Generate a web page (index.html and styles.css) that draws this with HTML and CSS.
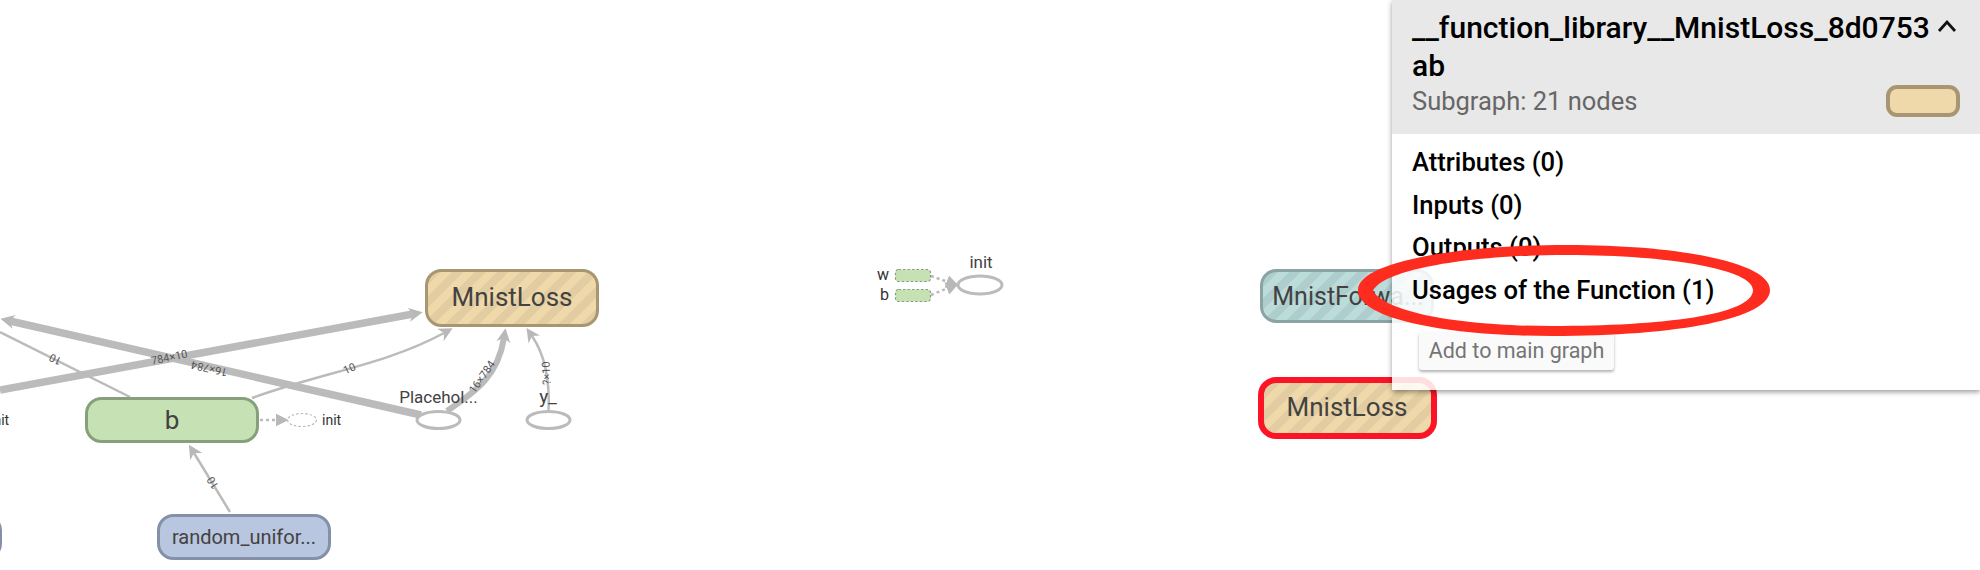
FILE: index.html
```html
<!DOCTYPE html>
<html lang="en">
<head>
<meta charset="utf-8">
<title>Function library graph</title>
<link rel="stylesheet" href="styles.css">
</head>
<body>
<main class="board">
  <svg class="graph" width="1980" height="570" viewBox="0 0 1980 570" xmlns="http://www.w3.org/2000/svg">
    <defs>
      <pattern id="stripe-tan" width="16" height="16" patternUnits="userSpaceOnUse" patternTransform="rotate(45)">
        <rect class="tan-base" width="16" height="16"/><rect class="tan-dark" width="8" height="16"/>
      </pattern>
      <pattern id="stripe-teal" width="16" height="16" patternUnits="userSpaceOnUse" patternTransform="rotate(45)">
        <rect class="teal-base" width="16" height="16"/><rect class="teal-dark" width="8" height="16"/>
      </pattern>
      <marker id="head" viewBox="0 0 10 10" refX="3" refY="5" markerWidth="14" markerHeight="14" markerUnits="userSpaceOnUse" orient="auto">
        <path class="head" d="M0 0L10 5L0 10L3 5z"/>
      </marker>
      <marker id="head-dot" viewBox="0 0 10 10" refX="1" refY="5" markerWidth="13" markerHeight="13" markerUnits="userSpaceOnUse" orient="auto">
        <path class="head" d="M0 0L10 5L0 10z"/>
      </marker>
    </defs>

    <line class="edge thin" x1="130" y1="397" x2="0" y2="332"/>
    <line class="edge thick" x1="421" y1="415" x2="10" y2="321" marker-end="url(#head)"/>
    <line class="edge thick" x1="0" y1="390" x2="413" y2="314" marker-end="url(#head)"/>
    <path class="edge thin" d="M252 398C320 373 385 365 444 333" marker-end="url(#head)"/>
    <path class="edge medium" d="M447 411C478 390 498 375 504 338" marker-end="url(#head)"/>
    <path class="edge thin" d="M548.500 411C550 380 545 355 532 336" marker-end="url(#head)"/>
    <line class="edge thin" x1="230" y1="512" x2="194" y2="453" marker-end="url(#head)"/>
    <line class="edge dotted" x1="260" y1="420" x2="277" y2="420" marker-end="url(#head-dot)"/>
    <line class="edge dotted" x1="931" y1="276" x2="948" y2="282" marker-end="url(#head-dot)"/>
    <line class="edge dotted" x1="931" y1="295" x2="948" y2="288" marker-end="url(#head-dot)"/>

    <rect class="node" x="-170.500" y="515.500" width="171" height="43" rx="15" fill="#b9c6df" stroke="#848fa8"/>
    <rect class="node" x="426.500" y="270.500" width="171" height="55" rx="15" fill="url(#stripe-tan)" stroke="#a89672"/>
    <rect class="node" x="86.500" y="398.500" width="171" height="43" rx="15" fill="#c6e1b4" stroke="#87a07c"/>
    <rect class="node" x="158.500" y="515.500" width="171" height="43" rx="15" fill="#b9c6df" stroke="#848fa8"/>
    <rect class="node" x="1261.500" y="270.500" width="171" height="51" rx="15" fill="url(#stripe-teal)" stroke="#8aa4a4"/>
    <rect class="node selected" x="1261" y="380" width="173" height="56" rx="15" fill="url(#stripe-tan)"/>

    <ellipse class="op" cx="438.500" cy="420" rx="21.500" ry="8.500"/>
    <ellipse class="op" cx="548.500" cy="420" rx="21.500" ry="8.500"/>
    <ellipse class="op-dashed" cx="302" cy="420" rx="14.500" ry="6.500"/>
    <ellipse class="op" cx="980" cy="285" rx="22" ry="9"/>
    <rect class="var-dashed" x="895.500" y="269.500" width="35" height="12" rx="3"/>
    <rect class="var-dashed" x="895.500" y="289.500" width="35" height="12" rx="3"/>

    <text class="label-lg" x="512" y="306">MnistLoss</text>
    <text class="label-lg" x="172" y="429">b</text>
    <text class="label-md" x="244" y="544">random_unifor...</text>
    <text class="label-lg label-fit" x="1348" y="305">MnistForwa...</text>
    <text class="label-lg" x="1347" y="416">MnistLoss</text>
    <text class="label-sm" x="438.500" y="403">Placehol...</text>
    <text class="label-sm label-y" x="548" y="403">y_</text>
    <text class="label-sm" x="981" y="268">init</text>
    <text class="label-xs start" x="322" y="425">init</text>
    <text class="label-xs start" x="-10" y="425">init</text>
    <text class="label-xs label-var end" x="889" y="280">w</text>
    <text class="label-xs label-var end" x="889" y="300">b</text>

    <text class="edge-label" transform="translate(170 361) rotate(-12)">784×10</text>
    <text class="edge-label" transform="translate(210 365) rotate(193)">16×784</text>
    <text class="edge-label" transform="translate(57 356) rotate(206)">10</text>
    <text class="edge-label" transform="translate(351 372) rotate(-24)">10</text>
    <text class="edge-label" transform="translate(485 379) rotate(-55)">16×784</text>
    <text class="edge-label" transform="translate(550 373) rotate(-92)">?×10</text>
    <text class="edge-label" transform="translate(216 481) rotate(-121)">10</text>
  </svg>

  <aside class="panel">
    <header class="panel-head">
      <div class="panel-title-row">
        <h1 class="panel-title">__function_library__MnistLoss_8d0753ab</h1>
        <svg class="chevron" width="20" height="14" viewBox="0 0 20 14" xmlns="http://www.w3.org/2000/svg"><path d="M2 13L10 4L18 13"/></svg>
      </div>
      <div class="panel-sub-row">
        <span class="panel-sub">Subgraph: 21 nodes</span>
        <span class="swatch"></span>
      </div>
    </header>
    <ul class="panel-list">
      <li>Attributes (0)</li>
      <li>Inputs (0)</li>
      <li>Outputs (0)</li>
      <li>Usages of the Function (1)</li>
    </ul>
    <button class="panel-btn" type="button">Add to main graph</button>
  </aside>

  <svg class="annotation" width="430" height="110" viewBox="0 0 430 110" xmlns="http://www.w3.org/2000/svg">
    <path class="ring" fill-rule="evenodd" d="M6 55C6 28 100 10 215 10C330 10 418 28 418 55C418 84 325 101 200 101C95 101 6 84 6 55ZM21 56C35 78 110 91 200 91C310 91 401 80 401 55C401 35 320 20 215 20C110 20 30 36 21 56Z"/>
  </svg>
</main>
</body>
</html>
```
FILE: styles.css
```css
* { box-sizing: border-box; }
html, body { margin: 0; padding: 0; background: #fff; }
.board {
  position: relative;
  width: 1980px;
  height: 570px;
  overflow: hidden;
  font-family: Roboto, "Liberation Sans", sans-serif;
}
.graph { position: absolute; left: 0; top: 0; }
.tan-base { fill: #efd8a9; }
.tan-dark { fill: #e2cca1; }
.teal-base { fill: #bcdbdb; }
.teal-dark { fill: #aecdcd; }
.head { fill: #b8b8b8; }
.edge { fill: none; stroke: #bbb; }
.thin { stroke-width: 2.5; }
.medium { stroke-width: 6; }
.thick { stroke-width: 7.5; }
.dotted { stroke-width: 2.5; stroke-dasharray: 3 3; }
.node { stroke-width: 3; }
.selected { stroke: #fb1326; stroke-width: 6; }
.op { fill: #fff; stroke: #bbb; stroke-width: 3; }
.op-dashed { fill: #fff; stroke: #bbb; stroke-width: 1.2; stroke-dasharray: 2.500 2; }
.var-dashed { fill: #c6e1b4; stroke: #87a07c; stroke-width: 1.2; stroke-dasharray: 2.500 2; }
.label-lg, .label-md, .label-sm, .label-xs { font-family: Roboto, "Liberation Sans", sans-serif; fill: #424242; text-anchor: middle; }
.label-lg { font-size: 26px; }
.label-fit { font-size: 25px; }
.label-md { font-size: 20px; }
.label-sm { font-size: 17px; }
.label-y { font-size: 19px; }
.label-xs { font-size: 14px; fill: #333; }
.label-var { font-size: 16px; }
.start { text-anchor: start; }
.end { text-anchor: end; }
.edge-label { font-family: Roboto, "Liberation Sans", sans-serif; font-size: 11px; fill: #555; text-anchor: middle; }

.panel {
  position: absolute;
  top: 0;
  right: 0;
  bottom: 180px;
  width: 588px;
  display: flex;
  flex-direction: column;
  background: rgba(255, 255, 255, .86);
  box-shadow: 0 2px 5px rgba(0, 0, 0, .4);
}
.panel-head {
  height: 134px;
  padding: 9px 20px 0;
  background: #e8e8e8;
}
.panel-title-row { display: flex; align-items: flex-start; gap: 5px; }
.panel-title {
  margin: 0;
  width: 520px;
  font-size: 30px;
  line-height: 38px;
  font-weight: 500;
  color: #000;
  word-break: break-all;
}
.chevron { margin-top: 9px; flex: none; }
.chevron path { fill: none; stroke: #111; stroke-width: 2.800; }
.panel-sub-row { display: flex; justify-content: space-between; align-items: center; }
.panel-sub { font-size: 25.500px; color: #666; }
.swatch {
  width: 74px;
  height: 32px;
  background: #efd8a9;
  border: 4px solid #a89672;
  border-radius: 11px;
}
.panel-list {
  list-style: none;
  margin: 0;
  padding: 7px 20px 0;
  font-size: 25.600px;
  font-weight: 500;
  color: #000;
}
.panel-list li { height: 42.700px; line-height: 42.700px; }
.panel-btn {
  align-self: flex-start;
  width: 195px;
  height: 38px;
  margin: 20px 0 0 27px;
  padding: 0;
  border: 0;
  border-radius: 3px;
  background: #fafafa;
  box-shadow: 0 2px 3px rgba(0, 0, 0, .3);
  font-family: Roboto, "Liberation Sans", sans-serif;
  font-size: 21.500px;
  color: #757575;
}
.annotation { position: absolute; left: 1352px; top: 235px; }
.ring { fill: #fe2c1e; }
```
